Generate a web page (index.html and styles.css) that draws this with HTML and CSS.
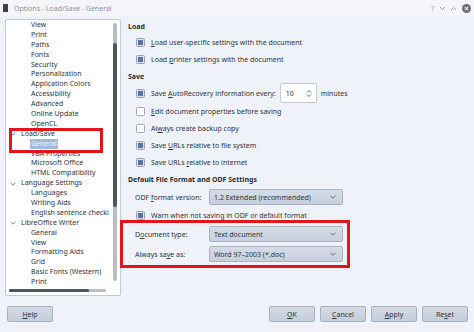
FILE: index.html
```html
<!DOCTYPE html>
<html>
<head>
<meta charset="utf-8">
<link rel="stylesheet" href="styles.css">
</head>
<body>
<div class="window">
  <div class="titlebar">
    <span class="appicon"></span>
    <span class="title">Options - Load/Save - General</span>
    <span class="tb-controls">
      <span class="tb-q">?</span>
      <svg class="tb-ico" width="7" height="5" viewBox="0 0 7 5"><path d="M1 1 L3.5 3.5 L6 1" fill="none" stroke="#9aa0a6" stroke-width="1"/></svg>
      <svg class="tb-ico" width="7" height="5" viewBox="0 0 7 5"><path d="M1 4 L3.5 1.5 L6 4" fill="none" stroke="#9aa0a6" stroke-width="1"/></svg>
      <svg class="tb-close" width="9" height="9" viewBox="0 0 9 9"><circle cx="4.5" cy="4.5" r="4.5" fill="#6b6f75"/><path d="M2.8 2.8 L6.2 6.2 M6.2 2.8 L2.8 6.2" stroke="#eef1f6" stroke-width="1.1"/></svg>
    </span>
  </div>

  <div class="main">
    <div class="tree">
      <div class="rows">
        <div class="row child">View</div>
        <div class="row child">Print</div>
        <div class="row child">Paths</div>
        <div class="row child">Fonts</div>
        <div class="row child">Security</div>
        <div class="row child">Personalization</div>
        <div class="row child">Application Colors</div>
        <div class="row child">Accessibility</div>
        <div class="row child">Advanced</div>
        <div class="row child">Online Update</div>
        <div class="row child">OpenCL</div>
        <div class="row parent"><svg class="exp" width="6" height="4" viewBox="0 0 6 4"><path d="M0.5 0.8 L3 3.2 L5.5 0.8" fill="none" stroke="#6e737a" stroke-width="0.9"/></svg>Load/Save</div>
        <div class="row child"><span class="sel">General</span></div>
        <div class="row child">VBA Properties</div>
        <div class="row child">Microsoft Office</div>
        <div class="row child">HTML Compatibility</div>
        <div class="row parent"><svg class="exp" width="6" height="4" viewBox="0 0 6 4"><path d="M0.5 0.8 L3 3.2 L5.5 0.8" fill="none" stroke="#6e737a" stroke-width="0.9"/></svg>Language Settings</div>
        <div class="row child">Languages</div>
        <div class="row child">Writing Aids</div>
        <div class="row child">English sentence checki</div>
        <div class="row parent"><svg class="exp" width="6" height="4" viewBox="0 0 6 4"><path d="M0.5 0.8 L3 3.2 L5.5 0.8" fill="none" stroke="#6e737a" stroke-width="0.9"/></svg>LibreOffice Writer</div>
        <div class="row child">General</div>
        <div class="row child">View</div>
        <div class="row child">Formatting Aids</div>
        <div class="row child">Grid</div>
        <div class="row child">Basic Fonts (Western)</div>
        <div class="row child">Print</div>
      </div>
      <div class="vscroll"><div class="vthumb"></div></div>
      <div class="hscroll"><div class="hthumb"></div></div>
      <div class="mark mark-tree"></div>
    </div>

    <div class="content">
      <div class="heading h-load">Load</div>
      <div class="cbrow"><span class="cb on"></span><span><u>L</u>oad user-specific settings with the document</span></div>
      <div class="cbrow"><span class="cb on"></span><span>Load <u>p</u>rinter settings with the document</span></div>
      <div class="heading h-save">Save</div>
      <div class="cbrow spinrow"><span class="cb on"></span><span class="spinlabel">Save <u>A</u>utoRecovery information every:</span>
        <span class="spin"><span>10</span><svg width="6" height="9" viewBox="0 0 6 9"><path d="M1 3.5 L3 1.5 L5 3.5 M1 5.5 L3 7.5 L5 5.5" fill="none" stroke="#555a60" stroke-width="0.9"/></svg></span>
        <span class="unit">minutes</span></div>
      <div class="cbrow"><span class="cb"></span><span><u>E</u>dit document properties before saving</span></div>
      <div class="cbrow"><span class="cb"></span><span>Al<u>w</u>ays create backup copy</span></div>
      <div class="cbrow"><span class="cb on"></span><span>Save <u>U</u>RLs relative to file system</span></div>
      <div class="cbrow"><span class="cb on"></span><span>Save URLs <u>r</u>elative to internet</span></div>
      <div class="heading h-def">Default File Format and ODF Settings</div>
      <div class="frow"><span class="flabel">ODF <u>f</u>ormat version:</span><span class="combo"><span>1.2 Extended (recommended)</span><svg width="6" height="4" viewBox="0 0 6 4"><path d="M0.6 0.8 L3 3.2 L5.4 0.8" fill="none" stroke="#555a60" stroke-width="0.9"/></svg></span></div>
      <div class="cbrow warn"><span class="cb on"></span><span>Warn when not saving in ODF or default format</span></div>
      <div class="frow f-doc"><span class="flabel">D<u>o</u>cument type:</span><span class="combo"><span>Text document</span><svg width="6" height="4" viewBox="0 0 6 4"><path d="M0.6 0.8 L3 3.2 L5.4 0.8" fill="none" stroke="#555a60" stroke-width="0.9"/></svg></span></div>
      <div class="frow f-as"><span class="flabel">Always sa<u>v</u>e as:</span><span class="combo"><span>Word 97–2003 (*.doc)</span><svg width="6" height="4" viewBox="0 0 6 4"><path d="M0.6 0.8 L3 3.2 L5.4 0.8" fill="none" stroke="#555a60" stroke-width="0.9"/></svg></span></div>
      <div class="mark mark-content"></div>
    </div>
  </div>

  <div class="buttons">
    <span class="btn"><u>H</u>elp</span>
    <span class="spacer"></span>
    <span class="btn"><u>O</u>K</span>
    <span class="btn"><u>C</u>ancel</span>
    <span class="btn"><u>A</u>pply</span>
    <span class="btn">Re<u>s</u>et</span>
  </div>
</div>
</body>
</html>
```

FILE: styles.css
```css
* { box-sizing: border-box; }
html, body { margin: 0; padding: 0; }
body {
  width: 474px;
  height: 332px;
  overflow: hidden;
  background: #eff2f9;
  font-family: "Noto Sans", "Open Sans", sans-serif;
  font-size: 7px;
  color: #2f3338;
}
u { text-decoration: underline; text-underline-offset: 1px; text-decoration-thickness: 0.7px; }
.window { width: 474px; height: 332px; display: flex; flex-direction: column; }

.titlebar {
  height: 16px;
  display: flex;
  align-items: center;
  padding: 0 3px;
  background: #f3f5f9;
}
.appicon { width: 5px; height: 8px; background: #3c4046; margin-right: 6px; border-radius: 0.5px; }
.title { color: #8d9299; font-size: 7px; }
.tb-controls { margin-left: auto; display: flex; align-items: center; gap: 4px; }
.tb-q { color: #9aa0a6; font-size: 7px; margin-right: 1px; }
.tb-close { margin-left: 1px; }

.main { display: flex; height: 281px; padding: 3px 0 0 5px; }

.tree {
  position: relative;
  width: 116px;
  height: 277px;
  background: #ffffff;
  border: 1px solid #c4c9d1;
  border-radius: 2px;
  overflow: hidden;
}
.rows { display: flex; flex-direction: column; padding-top: 0px; }
.row { height: 9.9px; line-height: 9.9px; white-space: nowrap; display: flex; align-items: center; }
.child { padding-left: 25px; }
.parent { padding-left: 4px; }
.exp { margin-right: 5px; margin-top: 1px; }
.sel { background: #9fbbdc; color: #f4f7fb; padding: 0 1px; margin-left: -1px; }

.vscroll {
  position: absolute;
  left: 107px; top: 3px;
  width: 4px; height: 258px;
  background: #b9bdc3;
  border-radius: 2px;
}
.vthumb { margin-top: 20px; height: 164px; background: #50555b; border-radius: 2px; }
.hscroll {
  position: absolute;
  left: 3px; top: 269px;
  width: 97px; height: 3px;
  background: #b9bdc3;
  border-radius: 2px;
}
.hthumb { width: 80px; height: 3px; background: #50555b; border-radius: 2px; }

.mark { position: absolute; border: 3px solid #e3141b; }
.mark-tree { left: 3px; top: 108px; width: 94px; height: 25px; }

.content { position: relative; flex: 1; padding-left: 7px; display: flex; flex-direction: column; }
.heading { font-weight: bold; color: #2a2e33; }
.h-load { height: 15px; line-height: 15px; margin-top: 0px; }
.h-save { height: 12px; line-height: 12px; margin-top: 3px; }
.h-def { height: 16px; line-height: 16px; margin-top: 1px; }

.cbrow { height: 17px; display: flex; align-items: center; padding-left: 8px; white-space: nowrap; }
.cb {
  width: 9px; height: 9px;
  border: 1px solid #a3a9b1;
  background: #fff;
  border-radius: 1.5px;
  margin-right: 6px;
  display: flex; align-items: center; justify-content: center;
  flex: none;
}
.cb.on { background: #dbe2ed; border-color: #97a3b5; }
.cb.on::after { content: ""; width: 5px; height: 5px; background: #5675a4; }

.spinrow { height: 20px; }
.spinlabel { margin-right: 4px; }
.spin {
  width: 37px; height: 20px;
  background: #fff;
  border: 1px solid #c3c9d2;
  border-radius: 2px;
  display: flex; align-items: center; justify-content: space-between;
  padding: 0 4px 0 5px;
}
.unit { margin-left: 4px; }

.frow { height: 18px; display: flex; align-items: center; padding-left: 7px; white-space: nowrap; }
.flabel { width: 74px; flex: none; }
.combo {
  width: 134px; height: 16px;
  background: linear-gradient(#d5dce7, #c6cfdc);
  border: 1px solid #a9b3c2;
  border-radius: 2px;
  display: flex; align-items: center; justify-content: space-between;
  padding: 0 6px 0 4px;
}
.warn { height: 18px; }
.f-doc { margin-top: 1px; }
.f-as { margin-top: 2px; }
.mark-content { left: -1px; top: 201px; width: 230px; height: 48px; }

.buttons { display: flex; align-items: center; gap: 5px; padding: 9px 6px 0 7px; }
.spacer { flex: 1; }
.btn {
  width: 46px; height: 16px;
  display: flex; align-items: center; justify-content: center;
  background: linear-gradient(#d4dbe6, #c4cdda);
  border: 1px solid #a7b1c0;
  border-radius: 2px;
  color: #2f3338;
}
```
